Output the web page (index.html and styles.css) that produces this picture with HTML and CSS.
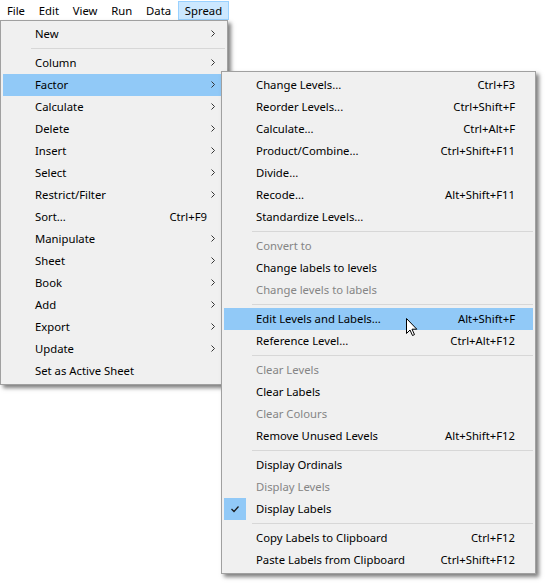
FILE: index.html
```html
<!DOCTYPE html>
<html>
<head>
<meta charset="utf-8">
<link rel="stylesheet" href="styles.css">
</head>
<body>
<div class="screen">
  <nav class="menubar">
    <span class="mb-item">File</span>
    <span class="mb-item">Edit</span>
    <span class="mb-item">View</span>
    <span class="mb-item">Run</span>
    <span class="mb-item">Data</span>
    <span class="mb-item active">Spread</span>
  </nav>

  <ul class="menu main-menu">
    <li class="item"><span class="label">New</span><svg class="arrow" viewBox="0 0 4 7"><path d="M0.5 0.5 L3.5 3.5 L0.5 6.5"/></svg></li>
    <li class="sep"></li>
    <li class="item"><span class="label">Column</span><svg class="arrow" viewBox="0 0 4 7"><path d="M0.5 0.5 L3.5 3.5 L0.5 6.5"/></svg></li>
    <li class="item hl"><span class="label">Factor</span><svg class="arrow" viewBox="0 0 4 7"><path d="M0.5 0.5 L3.5 3.5 L0.5 6.5"/></svg></li>
    <li class="item"><span class="label">Calculate</span><svg class="arrow" viewBox="0 0 4 7"><path d="M0.5 0.5 L3.5 3.5 L0.5 6.5"/></svg></li>
    <li class="item"><span class="label">Delete</span><svg class="arrow" viewBox="0 0 4 7"><path d="M0.5 0.5 L3.5 3.5 L0.5 6.5"/></svg></li>
    <li class="item"><span class="label">Insert</span><svg class="arrow" viewBox="0 0 4 7"><path d="M0.5 0.5 L3.5 3.5 L0.5 6.5"/></svg></li>
    <li class="item"><span class="label">Select</span><svg class="arrow" viewBox="0 0 4 7"><path d="M0.5 0.5 L3.5 3.5 L0.5 6.5"/></svg></li>
    <li class="item"><span class="label">Restrict/Filter</span><svg class="arrow" viewBox="0 0 4 7"><path d="M0.5 0.5 L3.5 3.5 L0.5 6.5"/></svg></li>
    <li class="item"><span class="label">Sort...</span><span class="key key-main">Ctrl+F9</span></li>
    <li class="item"><span class="label">Manipulate</span><svg class="arrow" viewBox="0 0 4 7"><path d="M0.5 0.5 L3.5 3.5 L0.5 6.5"/></svg></li>
    <li class="item"><span class="label">Sheet</span><svg class="arrow" viewBox="0 0 4 7"><path d="M0.5 0.5 L3.5 3.5 L0.5 6.5"/></svg></li>
    <li class="item"><span class="label">Book</span><svg class="arrow" viewBox="0 0 4 7"><path d="M0.5 0.5 L3.5 3.5 L0.5 6.5"/></svg></li>
    <li class="item"><span class="label">Add</span><svg class="arrow" viewBox="0 0 4 7"><path d="M0.5 0.5 L3.5 3.5 L0.5 6.5"/></svg></li>
    <li class="item"><span class="label">Export</span><svg class="arrow" viewBox="0 0 4 7"><path d="M0.5 0.5 L3.5 3.5 L0.5 6.5"/></svg></li>
    <li class="item"><span class="label">Update</span><svg class="arrow" viewBox="0 0 4 7"><path d="M0.5 0.5 L3.5 3.5 L0.5 6.5"/></svg></li>
    <li class="item"><span class="label">Set as Active Sheet</span></li>
  </ul>

  <ul class="menu sub-menu">
    <li class="item"><span class="label">Change Levels...</span><span class="key">Ctrl+F3</span></li>
    <li class="item"><span class="label">Reorder Levels...</span><span class="key">Ctrl+Shift+F</span></li>
    <li class="item"><span class="label">Calculate...</span><span class="key">Ctrl+Alt+F</span></li>
    <li class="item"><span class="label">Product/Combine...</span><span class="key">Ctrl+Shift+F11</span></li>
    <li class="item"><span class="label">Divide...</span></li>
    <li class="item"><span class="label">Recode...</span><span class="key">Alt+Shift+F11</span></li>
    <li class="item"><span class="label">Standardize Levels...</span></li>
    <li class="sep"></li>
    <li class="item disabled"><span class="label">Convert to</span></li>
    <li class="item"><span class="label">Change labels to levels</span></li>
    <li class="item disabled"><span class="label">Change levels to labels</span></li>
    <li class="sep"></li>
    <li class="item hl"><span class="label">Edit Levels and Labels...</span><span class="key">Alt+Shift+F</span></li>
    <li class="item"><span class="label">Reference Level...</span><span class="key">Ctrl+Alt+F12</span></li>
    <li class="sep"></li>
    <li class="item disabled"><span class="label">Clear Levels</span></li>
    <li class="item"><span class="label">Clear Labels</span></li>
    <li class="item disabled"><span class="label">Clear Colours</span></li>
    <li class="item"><span class="label">Remove Unused Levels</span><span class="key">Alt+Shift+F12</span></li>
    <li class="sep"></li>
    <li class="item"><span class="label">Display Ordinals</span></li>
    <li class="item disabled"><span class="label">Display Levels</span></li>
    <li class="item"><span class="check"><svg viewBox="0 0 22 22"><path d="M7.5 11 L10 13.5 L14.5 8.5"/></svg></span><span class="label">Display Labels</span></li>
    <li class="sep"></li>
    <li class="item"><span class="label">Copy Labels to Clipboard</span><span class="key">Ctrl+F12</span></li>
    <li class="item"><span class="label">Paste Labels from Clipboard</span><span class="key">Ctrl+Shift+F12</span></li>
  </ul>

  <svg class="cursor" viewBox="0 0 13 19" width="13" height="19"><path d="M0.5 0.5 L0.5 15.5 L4 12 L6.5 17.5 L8.5 16.6 L6 11.2 L10.8 11.2 Z"/></svg>
</div>
</body>
</html>
```
FILE: styles.css
```css
* { box-sizing: border-box; }
html, body { margin: 0; padding: 0; background: #ffffff; }
body {
  font-family: "Segoe UI", "Noto Sans", "DejaVu Sans", sans-serif;
  font-size: 11.3px;
  color: #000;
}
.screen { position: relative; width: 551px; height: 585px; overflow: hidden; }

.menubar {
  display: flex;
  height: 20px;
  align-items: stretch;
  background: #ffffff;
}
.mb-item {
  display: flex;
  align-items: center;
  padding: 0 5.9px 1px;
  border: 1px solid transparent;
  margin-top: 1px;
}
.mb-item.active {
  background: #cce8ff;
  border: 1px solid #99d1ff;
}

.menu {
  list-style: none;
  margin: 0;
  padding: 2px;
  background: #f0f0f0;
  border: 1px solid #a0a0a0;
  box-shadow: 3px 3px 4px rgba(0, 0, 0, 0.5);
  position: absolute;
}
.main-menu { left: 0; top: 20px; width: 228px; }
.sub-menu { left: 221px; top: 71px; width: 315px; }

.item {
  position: relative;
  display: flex;
  align-items: center;
  height: 22px;
  padding: 0 18px 1px 32px;
  white-space: nowrap;
}
.item .label { flex: 1; }
.item.hl { background: #91c9f7; }
.item.disabled { color: #858585; }
.key { text-align: right; }
.arrow {
  width: 4px;
  height: 7px;
  margin-right: -8px;
  fill: none;
  stroke: #333;
  stroke-width: 1;
}
.sep {
  height: 7px;
  padding-top: 3px;
  margin-left: 28px;
}
.sep::before {
  content: "";
  display: block;
  height: 1px;
  background: #d7d7d7;
}
.check {
  position: absolute;
  left: 0;
  top: 0;
  width: 22px;
  height: 22px;
  background: #91c9f7;
}
.check svg {
  width: 22px;
  height: 22px;
  fill: none;
  stroke: #1a1a1a;
  stroke-width: 1.3;
}
.cursor {
  position: absolute;
  left: 406px;
  top: 318px;
  fill: #ffffff;
  stroke: #000000;
  stroke-width: 1;
}
```
